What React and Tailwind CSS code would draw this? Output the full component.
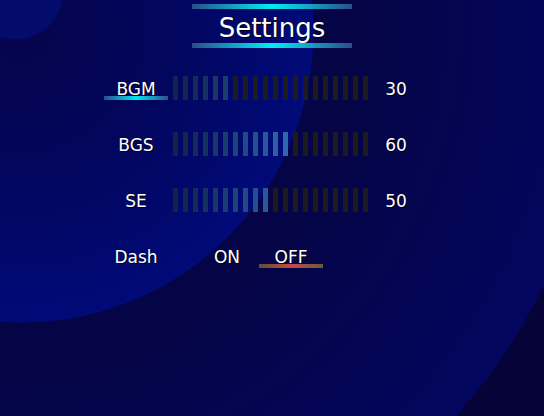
import React from "react";

const sliders = [
  { label: "BGM", value: 30, selected: true },
  { label: "BGS", value: 60 },
  { label: "SE", value: 50 },
];

function barColor(i) {
  const c0 = [15, 36, 76];
  const c1 = [48, 104, 172];
  const t = Math.pow(i / 11, 1.3);
  const c = c0.map((v, k) => Math.round(v + (c1[k] - v) * t));
  return `rgb(${c[0]},${c[1]},${c[2]})`;
}

function Bars({ value }) {
  const filled = Math.round(value / 5);
  return (
    <div className="flex gap-[5px] h-[24px]">
      {Array.from({ length: 20 }).map((_, i) => (
        <div
          key={i}
          className="w-[5px] h-[24px]"
          style={{ backgroundColor: i < filled ? barColor(i) : "#1d1b1d" }}
        />
      ))}
    </div>
  );
}

const textCls =
  "text-[17px] leading-[24px] text-white [text-shadow:1px_1px_0_rgba(0,0,0,0.75),0_0_1px_rgba(0,0,0,0.6)]";

function Label({ text, selected }) {
  return (
    <div className="w-[64px] ml-[104px] mt-[1px] flex flex-col items-center">
      <span className={textCls}>{text}</span>
      {selected && (
        <div className="-mt-[5px] w-[64px] h-[4px] bg-[linear-gradient(to_right,#2d4f8e,#00e6f0_50%,#2d4f8e)]" />
      )}
    </div>
  );
}

export default function App() {
  return (
    <div className="relative w-[544px] h-[416px] overflow-hidden font-['DejaVu_Sans',sans-serif] bg-[#050338] [background-image:radial-gradient(circle_at_15px_-9px,#030b6b_48px,transparent_49px),radial-gradient(circle_at_21px_30px,#05044b_0px,#03065e_150px,#000a78_292px,transparent_293px),radial-gradient(circle_at_4px_18px,#050446_0px,#050446_350px,#03065f_602px,transparent_603px)]">
      <div className="flex flex-col items-center pt-[4px]">
        <div className="w-[160px] h-[5px] bg-[linear-gradient(to_right,#2b4d8c,#00eef2_50%,#2b4d8c)]" />
        <div className="mt-[4px] text-[26px] leading-[30px] text-white [text-shadow:1px_1px_0_rgba(0,0,0,0.8),0_0_1px_rgba(0,0,0,0.6)]">
          Settings
        </div>
        <div className="w-[160px] h-[5px] bg-[linear-gradient(to_right,#2b4d8c,#00eef2_50%,#2b4d8c)]" />
      </div>

      <div className="mt-[28px] flex flex-col gap-[32px]">
        {sliders.map((s) => (
          <div key={s.label} className="flex items-start h-[24px]">
            <Label text={s.label} selected={s.selected} />
            <div className="ml-[5px]">
              <Bars value={s.value} />
            </div>
            <div className={`w-[56px] mt-[1px] text-center ${textCls}`}>{s.value}</div>
          </div>
        ))}

        <div className="flex items-start h-[24px]">
          <Label text="Dash" />
          <div className="ml-[27px] w-[64px] mt-[1px] flex flex-col items-center">
            <span className={textCls}>ON</span>
          </div>
          <div className="w-[64px] mt-[1px] flex flex-col items-center">
            <span className={textCls}>OFF</span>
            <div className="-mt-[5px] w-[64px] h-[4px] bg-[linear-gradient(to_right,#5e5034,#c84848_50%,#6a5a3a)]" />
          </div>
        </div>
      </div>
    </div>
  );
}
